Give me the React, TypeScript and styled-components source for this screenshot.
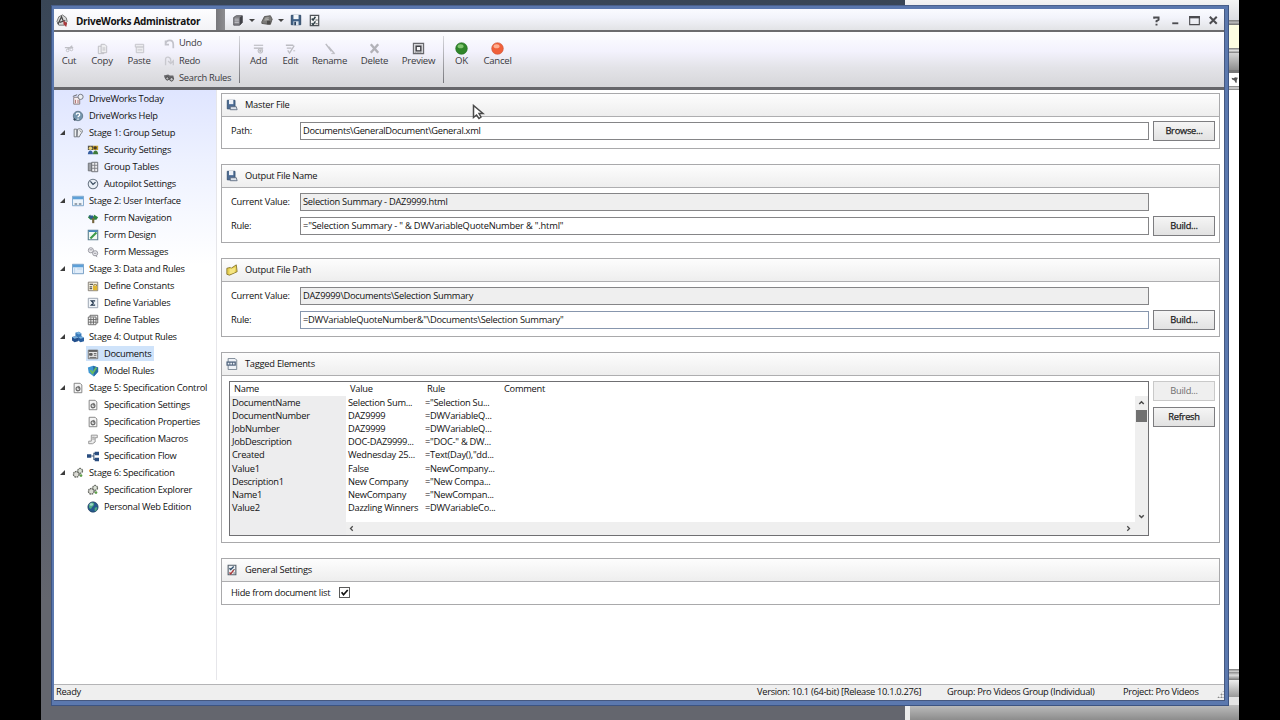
import React from 'react';
import styled, { createGlobalStyle } from 'styled-components';

const GlobalStyle = createGlobalStyle`
  * { box-sizing: border-box; }
  body { margin: 0; background: #000; overflow: hidden; }
  svg { flex: none; }
`;

const Desktop = styled.div`
  position: relative;
  width: 1280px;
  height: 720px;
  padding: 0 41px;
  background: #000;
  overflow: hidden;
  display: flex;
  font: 9.3px/14px 'Open Sans', 'Noto Sans', sans-serif;
  letter-spacing: -0.26px;
  color: #111;
  white-space: nowrap;
`;
const Wallpaper = styled.div`
  width: 864px;
  background: linear-gradient(#394656 0, #3f4b5d 120px, #4a5468 330px, #64666e 600px, #64666e);
`;
const BackWindow = styled.div`
  flex: 1;
  display: flex;
  flex-direction: column;
  background: #fff;
`;
const Strip = styled.div<{ $h: number; $bg: string }>`
  height: ${p => p.$h}px;
  flex: none;
  background: ${p => p.$bg};
`;
const BackFoot = styled.div`
  flex: 1;
  border-left: 5px solid #ececec;
  background: linear-gradient(#bdbdbd, #8c8c8c);
`;
const BackMark = styled.div`
  height: 13px;
  display: flex;
  justify-content: flex-end;
  align-items: center;
  background: #fff;
`;

const Window = styled.div`
  position: absolute;
  left: 51px;
  top: 5px;
  width: 1178px;
  height: 701px;
  border: 1px solid #3d5482;
  border-top-color: #4a608b;
  background: #5b78ae;
  padding: 3px 3px 4px 2px;
  display: flex;
`;
const Frame = styled.div`
  flex: 1;
  min-width: 0;
  display: flex;
  flex-direction: column;
  background: #fff;
  border: solid #46587f;
  border-width: 0 1px 1px 0;
`;
const TitleBar = styled.div`
  height: 23px;
  display: flex;
  align-items: center;
  background: linear-gradient(#fafbff, #f3f4fb 40%, #e2e3e6);
  border-bottom: 2px solid #6b6b6e;
`;
const Brand = styled.div`
  width: 162px;
  height: 21px;
  padding: 2px 0 0 2px;
  display: flex;
  align-items: center;
  gap: 7px;
  background: linear-gradient(#fdfdff, #f3f3f6);
  font-size: 10px;
  font-weight: 700;
  letter-spacing: -0.3px;
  color: #111;
`;
const BrandEdge = styled.div`
  width: 9px;
  height: 21px;
  background: linear-gradient(90deg, #77777b, #8d8d91);
`;
const QuickBar = styled.div`
  flex: 1;
  display: flex;
  align-items: center;
  padding: 1px 0 0 6.5px;
`;
const Caret = styled.i`
  border: 3px solid transparent;
  border-bottom-width: 0;
  border-top-color: #444;
  margin: 0 6px 0 5px;
`;
const QuickGap = styled.i<{ $w: number }>`width: ${p => p.$w}px;`;
const Controls = styled.div`
  display: flex;
  align-items: center;
  gap: 6px;
  padding: 2px 4px 0 0;
`;

const Toolbar = styled.div`
  height: 58px;
  display: flex;
  background: linear-gradient(#fdfdff 0, #f3f2fd 35%, #e3e3e8 65%, #d6d6d9);
  border-bottom: 3px solid #66666a;
  color: #3a3a40;
`;
const Tool = styled.div<{ $w: number }>`
  width: ${p => p.$w}px;
  padding-top: 10px;
  display: flex;
  flex-direction: column;
  align-items: center;
  font-size: 9.6px;
  line-height: 11px;
`;
const SmallTools = styled.div`
  width: 78.5px;
  padding: 2px 0 0 3px;
`;
const SmallTool = styled.div`
  height: 17.7px;
  display: flex;
  align-items: center;
  gap: 4px;
`;
const Divider = styled.div`
  width: 1px;
  margin: 4px 0;
  background: linear-gradient(#d8d8de, #77777c);
`;

const Body = styled.div`
  flex: 1;
  display: flex;
  min-height: 0;
  background: #fff;
`;
const Sidebar = styled.div`
  width: 163px;
  background: linear-gradient(#dfe5ff 0, #edf1ff 70px, #fff 175px);
  border-right: 1px solid #e6e6ea;
  margin-bottom: 4px;
`;
const TreeRow = styled.div<{ $level: number }>`
  height: 17px;
  padding-left: ${p => (p.$level === 2 ? 32 : 6)}px;
  display: flex;
  align-items: center;
`;
const Expander = styled.span<{ $open?: boolean }>`
  width: 11px;
  flex: none;
  display: flex;
  &::before {
    content: '';
    border-style: solid;
    border-width: 0 0 5px 5px;
    border-color: transparent transparent ${p => (p.$open ? '#3c3c3c' : 'transparent')} transparent;
  }
`;
const TreeLabel = styled.span<{ $on?: boolean }>`
  height: 15px;
  line-height: 15px;
  padding: 0 3px 0 4px;
  background: ${p => (p.$on ? '#cfe3fa' : 'none')};
`;
const TreeIcon = styled.span<{ $on?: boolean }>`
  width: 14px;
  height: 15px;
  flex: none;
  display: flex;
  align-items: center;
  justify-content: center;
  background: ${p => (p.$on ? '#cfe3fa' : 'none')};
`;

const Content = styled.div`
  flex: 1;
  padding: 3px 4px 0 4px;
  display: flex;
  flex-direction: column;
  gap: 15px;
`;
const Panel = styled.section<{ $h: number }>`
  height: ${p => p.$h}px;
  border: 1px solid #a9a9ab;
  background: #fff;
`;
const PanelHead = styled.header`
  height: 23px;
  padding-left: 4px;
  display: flex;
  align-items: center;
  gap: 7px;
  background: linear-gradient(#fdfdfd, #eeeeee);
  border-bottom: 1px solid #aeaeb0;
`;
const Fields = styled.div`
  padding: 4px 4px 0 9px;
  display: flex;
  flex-direction: column;
  gap: 4px;
`;
const Field = styled.div`
  height: 20px;
  display: flex;
  align-items: center;
`;
const FieldName = styled.label`
  width: 69px;
`;
const Box = styled.div<{ $ro?: boolean; $blue?: boolean; $t?: number }>`
  width: 849px;
  height: 18px;
  padding-left: 2px;
  line-height: 15.5px;
  border: 1px solid ${p => (p.$blue ? '#8796ad' : '#858587')};
  background: ${p => (p.$ro ? '#efefef' : '#fff')};
  letter-spacing: ${p => p.$t ?? -0.26}px;
`;
const Btn = styled.button<{ $off?: boolean }>`
  width: 62px;
  height: 20px;
  margin-left: 4px;
  padding: 0;
  font: inherit;
  letter-spacing: -0.26px;
  -webkit-text-stroke: ${p => (p.$off ? 0 : 0.25)}px;
  color: ${p => (p.$off ? '#6e6e6e' : '#1c1c1c')};
  border: 1px solid ${p => (p.$off ? '#c9c9c9' : '#7d7d80')};
  background: ${p => (p.$off ? '#efefef' : 'linear-gradient(#f5f5f5, #e2e2e2)')};
`;

const GridArea = styled.div`
  padding: 4px 0 0 7px;
  display: flex;
`;
const Grid = styled.div`
  width: 920px;
  height: 155px;
  margin-top: 1px;
  border: 1px solid #6f6f72;
  background: #fff;
  display: flex;
  flex-direction: column;
`;
const GridHead = styled.div`
  height: 14px;
  display: grid;
  grid-template-columns: 116px 77px 77px 1fr;
  padding-left: 4px;
  line-height: 14px;
`;
const GridMain = styled.div`
  flex: 1;
  display: flex;
  min-height: 0;
`;
const Names = styled.div`
  width: 116px;
  padding-left: 2px;
  background: #ededee;
`;
const Cell = styled.div`
  height: 13.12px;
  line-height: 13.12px;
`;
const Scroller = styled.div`
  flex: 1;
  display: flex;
  flex-direction: column;
`;
const Cells = styled.div`
  flex: 1;
  display: flex;
`;
const Column = styled.div<{ $w?: number }>`
  ${p => (p.$w ? `width: ${p.$w}px;` : 'flex: 1;')}
  padding-left: 2px;
`;
const VBar = styled.div`
  width: 13px;
  padding: 3px 0 2px;
  display: flex;
  flex-direction: column;
  align-items: center;
  background: #efefef;
`;
const Thumb = styled.div`
  width: 11px;
  height: 12px;
  margin: 4px 0 auto;
  background: #717171;
`;
const HBar = styled.div`
  height: 13px;
  padding: 0 16px 0 2px;
  display: flex;
  align-items: center;
  justify-content: space-between;
  background: #efefef;
`;
const BtnStack = styled.div`
  padding-top: 1px;
  display: flex;
  flex-direction: column;
  gap: 6px;
`;
const CheckRow = styled.div`
  height: 21px;
  padding-left: 9px;
  display: flex;
  align-items: center;
  gap: 9px;
`;
const Check = styled.span`
  width: 11px;
  height: 11px;
  border: 1px solid #5a5a5a;
  display: flex;
`;

const StatusBar = styled.footer`
  height: 16px;
  display: flex;
  align-items: center;
  padding: 0 0 2px 2px;
  background: #efefef;
  border-top: 1px solid #b4b4b6;
`;
const StatusItem = styled.span<{ $w?: number }>`
  ${p => (p.$w ? `width: ${p.$w}px;` : 'flex: 1;')}
  letter-spacing: -0.31px;
`;
const Grip = styled.span`
  width: 7px;
  height: 8px;
  margin-top: 5px;
  background: radial-gradient(#8a8a8a 0.9px, transparent 1.1px) 0 0 / 3px 3px;
  clip-path: polygon(100% 0, 100% 100%, 0 100%);
`;
const Pointer = styled.div`
  position: absolute;
  left: 472px;
  top: 104px;
  line-height: 0;
`;

const shapes: Record<string, React.ReactNode> = {
  logo: <><path d="M3 3l4-2 4 3 1 4-3 4H3L1 8z" fill="#dadada" stroke="#6e6e6e" /><path d="M2 11l4-8 2 5M4 9l6-2" fill="none" stroke="#454545" strokeWidth="1.3" /><path d="M8 7l4 3-1 4-3-3z" fill="#a8383c" /></>,
  cube: <><path d="M2 4l3-2h7v8l-3 3H2z" fill="#85858a" stroke="#4f4f55" /><path d="M9 4l3-2v8l-3 3z" fill="#3f4046" /><path d="M3 6h5M3 8h5M3 10h5" stroke="#c6c6cb" /></>,
  cube2: <><path d="M1 9l3-6 7-1 2 4-2 6H8L1 11z" fill="#7c7b79" stroke="#53524f" /><path d="M5 5l4-.5M4 7l5-.5" stroke="#c2c2be" /><path d="M7 8h4v4H7z" fill="#4c4b49" /></>,
  save: <><path d="M1.500 1.500h11v11h-11z" fill="#3f6187" stroke="#28415f" /><path d="M4 1h6v5H4z" fill="#f3f6fa" /><path d="M4 8.500h6V13H4z" fill="#dbe3ec" /><path d="M5 9h2v4H5z" fill="#28415f" /></>,
  list: <><path d="M2.500 1.500h9v11h-9z" fill="#f4f4f4" stroke="#4f5358" strokeWidth="1.300" /><path d="M4 5l1.500 1.500L8 3M4 10l1.500 1.500L8 8" fill="none" stroke="#2e3f46" strokeWidth="1.600" /><path d="M8 6.500h2.500M8 10.500h2.500" stroke="#555" /></>,
  checklist: <><path d="M2.500 1.500h9v11h-9z" fill="#eef1f4" stroke="#56616c" strokeWidth="1.300" /><path d="M4 5l1.500 1.500L9 3" fill="none" stroke="#34516d" strokeWidth="1.600" /><path d="M4 10l1.500 1.500L9 7" fill="none" stroke="#a83c3c" strokeWidth="1.600" /><path d="M8.500 6.500h2M8.500 10.500h2" stroke="#666" /></>,
  help: <path d="M4.500 5V3.700h4.700v2.500L7 7.600V9M7 10.500v1.800" fill="none" stroke="#4c4c50" strokeWidth="2.100" />,
  min: <path d="M3.500 10h6.500" stroke="#4c4c50" strokeWidth="2" />,
  max: <><path d="M1.800 2.800h10.400v8.700H1.800z" fill="none" stroke="#4c4c50" strokeWidth="1.200" /><path d="M1.200 3.500h11.600" stroke="#4c4c50" strokeWidth="2.400" /></>,
  close: <path d="M3 3l7.500 7.500M10.500 3L3 10.500" stroke="#4c4c50" strokeWidth="2.200" />,
  cut: <g fill="none" stroke="#bfbfc5"><path d="M2 6h9M5 8l5-4" strokeWidth="1.500" /><circle cx="5" cy="9" r="1.500" /><circle cx="9" cy="8" r="1.500" /></g>,
  copy: <g fill="#eeeef0" stroke="#bcbcc2"><path d="M2.500 4.500h6v8h-6z" /><path d="M5.500 2.500h4l2 2v7h-6z" /><path d="M7 6.500h3M7 8.500h3" /></g>,
  paste: <g fill="#ececef" stroke="#c4c4c9"><path d="M2.500 2.500h9v3h-9z" /><path d="M3.500 5.500h8v6h-8z" /><path d="M5 8.500h5" /></g>,
  undo: <path d="M3 4v5h4M3 8c1-5 9-6 9 1v4" fill="none" stroke="#c3c3cb" strokeWidth="2" />,
  redo: <path d="M3 12V5c0-4 6-3 6 1v2M6 7l3 3 3-3v5" fill="none" stroke="#c9c9cf" strokeWidth="1.600" />,
  binoc: <><path d="M1 4l5-1 2 1 4 0 1 4-3 3-3-2-2 1-3-3z" fill="#67676b" /><circle cx="5" cy="7.500" r="1.800" fill="#b8b8bc" stroke="#444" /><circle cx="10" cy="8.500" r="2" fill="#c8c8cc" stroke="#444" /></>,
  add: <g fill="none" stroke="#b5b5bb"><path d="M2 3.500h10M2 6.500h10" strokeWidth="1.300" /><circle cx="9" cy="9.500" r="2.500" fill="#e6e6ea" /><path d="M9 8v3M7.500 9.500h3" /></g>,
  edit: <g fill="none" stroke="#bcbcc2"><path d="M2 3.500h8M3 6.500h5M4 9l2 3 5-8" strokeWidth="1.400" /><path d="M10 9.500h2" /></g>,
  rename: <g fill="none" stroke="#bdbdc3"><path d="M3 2l6 8M6 5l6 7" strokeWidth="1.600" /><path d="M9 12.500h4" /></g>,
  del: <path d="M3 2.500l8 9M11 2.500l-8 9" stroke="#b2b2b8" strokeWidth="2.600" />,
  preview: <><path d="M1.500 1.500h11v11h-11z" fill="#d6d6da" stroke="#66666b" strokeWidth="1.200" /><path d="M4.500 4.500h5v5h-5z" fill="#f4f4f6" stroke="#3f3f44" strokeWidth="1.500" /><path d="M3 11.500h8" stroke="#777" strokeDasharray="1 1" /></>,
  ok: <><circle cx="7" cy="7" r="6.300" fill="#2f8529" stroke="#1f6a20" strokeWidth=".6" /><ellipse cx="6" cy="4.500" rx="3.200" ry="2.200" fill="#8fd07c" opacity=".85" /></>,
  cancel: <><circle cx="7" cy="7" r="6.300" fill="#f0603a" stroke="#c9563a" strokeWidth=".6" /><ellipse cx="6" cy="4.500" rx="3.200" ry="2.200" fill="#ffb89c" opacity=".9" /></>,
  today: <><path d="M2 5h7v8H2z" fill="#f6eeee" stroke="#7d7577" /><path d="M4 8v4M7 8v4" stroke="#a55b5b" /><circle cx="10" cy="4.500" r="3" fill="#eceff4" stroke="#666b75" /><path d="M1 4l5-2" stroke="#555" /></>,
  qhelp: <><circle cx="7" cy="7" r="5.500" fill="#7596ae" stroke="#5c7283" /><path d="M5 5.500c0-2.500 4-2.500 4 0 0 1.500-2 1.500-2 3M7 10v1.500" fill="none" stroke="#fff" strokeWidth="1.500" /><path d="M2 10l2 2" stroke="#34485a" strokeWidth="2" /></>,
  stage1: <g fill="#eceef0" stroke="#6b6f75"><path d="M2.500 2.500h3v9h-3z" /><path d="M6.500 2.500c6-2 7 4 4 5l-2 4H6z" /><path d="M9 4l2 2" /></g>,
  security: <><path d="M1 2h6v5H1z" fill="#57544a" /><path d="M7 2h6v5H7z" fill="#c79e2c" /><circle cx="4" cy="5" r="2" fill="#ecd478" /><circle cx="9.500" cy="4.500" r="2" fill="#443a26" /><path d="M1 12c0-6 6-6 6 0z" fill="#375fa0" /><path d="M7 12c0-6 6-6 6 0z" fill="#3f7a3a" /></>,
  tables: <><path d="M1.500 2.500h4v9h-4z" fill="#9da0a5" stroke="#6b6e73" /><path d="M5.500 1.500h7v11h-7z" fill="#ededf0" stroke="#5f6267" /><path d="M5.500 5h7M5.500 8.500h7M9 2v10" stroke="#77797e" /></>,
  clock: <><circle cx="7" cy="7" r="5.600" fill="#e9eff6" stroke="#6a7684" strokeWidth="1.200" /><path d="M4 4l3 3.500L10 5" fill="none" stroke="#35475c" strokeWidth="1.400" /></>,
  form: <><path d="M.5 1.500h13v11H.5z" fill="#edf4fb" stroke="#6f9cc4" /><path d="M1 2h12v3H1z" fill="#5da0d8" /><path d="M3 10.500h3M8 10.500h3" stroke="#7a8896" strokeWidth="2" /></>,
  data: <><path d="M.5 1.500h13v11H.5z" fill="#e2eefa" stroke="#6893bd" /><path d="M1 2h12v3H1z" fill="#5da0d8" /><path d="M3 6v6M6 7h6" stroke="#b8d2ea" /></>,
  sign: <><path d="M1 6l3-3v2h4V3l5 3-2 3H4z" fill="#2d8540" /><path d="M2 4h5v4H4z" fill="#2f5a92" /><path d="M6 7h2.500v6H6z" fill="#75663e" /></>,
  design: <><path d="M1.500 1.500h11v11h-11z" fill="#f2faf4" stroke="#5b7f8f" strokeWidth="1.300" /><path d="M2 2.500h10" stroke="#4286bd" strokeWidth="2" /><path d="M4 11l7-7" stroke="#3a9a49" strokeWidth="2.400" /></>,
  msg: <g fill="#ebebef" stroke="#8e8e96"><circle cx="4.500" cy="5" r="3" /><circle cx="9.500" cy="8.500" r="3" /><path d="M3 4.500h3M8 8.500h3M10 11l2 2" /></g>,
  constants: <><path d="M1.500 2.500h11v10h-11z" fill="#f4f0df" stroke="#77726a" /><path d="M3 5h4M3 8h3M3 10h3" stroke="#5c5c5c" strokeWidth="1.400" /><path d="M7 7h5v5H7z" fill="#e0b632" /><path d="M8 7V5.500h3V7" fill="none" stroke="#8d6f1c" /></>,
  sigma: <><path d="M1.500 1.500h11v11h-11z" fill="#f1f5f9" stroke="#8d98a6" /><path d="M9.500 4.500H5L7.500 7 5 9.500h4.500" fill="none" stroke="#26384f" strokeWidth="1.400" /></>,
  dtables: <g fill="#f1f1f1" stroke="#606060"><path d="M3.500 1.500h9v9h-9z" /><path d="M1.500 3.500h9v9h-9z" /><path d="M1.500 6.500h9M1.500 9.500h9M4.500 4v8M7.500 4v8M10 6h3" /></g>,
  cubes: <><path d="M4 2l4-1 3 2v4L8 8 4 6z" fill="#3979b8" /><path d="M0 7l4-1 3 2v4l-4 1-3-2z" fill="#234f8c" /><path d="M7 7l4-1 3 2v4l-4 1-3-2z" fill="#2a5f9f" /><path d="M4 2l4-1 3 2-3 1zM0 7l4-1 3 2-4 1zM7 7l4-1 3 2-4 1z" fill="#76b0dd" /></>,
  docs: <><path d="M1.500 2.500h11v10h-11z" fill="#e6e6e6" stroke="#6b6b6b" /><path d="M2 3.500h10" stroke="#565656" strokeWidth="2" /><path d="M3 6.500h3v2H3zM8 6.500h3M8 8.500h3M3 11h8" fill="#666" stroke="#555" /></>,
  model: <><path d="M1 3l6-2 6 2v5l-5 5.500L2 9z" fill="#3f97d3" /><path d="M7 1l6 2v5l-5 5.500z" fill="#2a6ca3" /><path d="M4 6l2.500 3.500L11 3" fill="none" stroke="#69bd5a" strokeWidth="2" /></>,
  spec: <><path d="M2.500 1.500h7l2 2v9h-9z" fill="#f5f5f5" stroke="#777" /><circle cx="7" cy="8" r="2.300" fill="#ddd" stroke="#666" strokeWidth="1.300" /><path d="M8 8V4.500" stroke="#666" /></>,
  macro: <g fill="#ececec" stroke="#8a8a8a"><path d="M5 2.500h7v3H9.500v5l-3 2H2v-3h3z" /><path d="M6 5h3M6 7h3" /></g>,
  flow: <><path d="M5 7h3V4h2M8 7v4h2" fill="none" stroke="#47617f" strokeWidth="1.300" /><path d="M0 5h5v4H0zM9 2h5v4H9zM9 9h5v4H9z" fill="#294d80" /></>,
  gears: <><circle cx="5" cy="8.500" r="3.300" fill="#dcdcd6" stroke="#63655f" strokeWidth="1.600" strokeDasharray="2 .7" /><circle cx="9.500" cy="4.500" r="2.800" fill="#dde3d8" stroke="#6a6d66" strokeWidth="1.500" strokeDasharray="2 .7" /><circle cx="10.500" cy="10" r="1.600" fill="#5f9f4a" /></>,
  globe: <><circle cx="7" cy="7" r="6" fill="#25598e" stroke="#24405e" strokeWidth=".8" /><path d="M5 2c4-1 4 3 2 4s-1 3-3 3-3-5 1-7zM9 8l3-1-1 4-2 1z" fill="#4fae80" /><ellipse cx="5" cy="4" rx="2" ry="1.400" fill="#c4e6ef" opacity=".7" /></>,
  disk: <><path d="M1.500 1.500h9v10h-9z" fill="#4c6c94" stroke="#35506f" /><path d="M3.500 1h5v5h-5z" fill="#eef2f8" /><path d="M5 9h7l1 3.500H5z" fill="#dce2ea" stroke="#5c6b7e" /></>,
  folder: <><path d="M1 5l4-1 1 1 6-4 1 8-9 4-3-1z" fill="#e6cf50" stroke="#82702a" /><path d="M4 6l7-2-1 6-6 2z" fill="#f5e583" /></>,
  tagdoc: <><path d="M2.500.5h8l2 2v11h-10z" fill="#eef2f7" stroke="#6b7887" /><path d="M.5 4h11v5H.5z" fill="#50647d" /><path d="M2 6.500h2M5 6.500h2M8 6.500h2" stroke="#e8eef5" strokeWidth="2" /></>,
  tick: <path d="M2.500 6.500l3 4L12 3" fill="none" stroke="#111" strokeWidth="2.600" />,
  up: <path d="M2.500 10L7 5.500l4.500 4.500" fill="none" stroke="#4b4b4b" strokeWidth="3" />,
  down: <path d="M2.500 4.500L7 9l4.500-4.500" fill="none" stroke="#4b4b4b" strokeWidth="3" />,
  left: <path d="M9.500 2.500L5 7l4.500 4.500" fill="none" stroke="#4b4b4b" strokeWidth="2.600" />,
  right: <path d="M4.500 2.500L9 7l-4.500 4.500" fill="none" stroke="#4b4b4b" strokeWidth="2.600" />,
  crest: <path d="M1 3l4 1 2-2 5 1-2 5v4H8L6 8 2 6z" fill="#555" />,
};

const Icon = ({ name, size = 12 }: { name: string; size?: number }) => (
  <svg width={size} height={size} viewBox="0 0 14 14">{shapes[name]}</svg>
);

type Node = [level: number, icon: string, text: string, open?: boolean];
const tree: Node[] = [
  [1, 'today', 'DriveWorks Today'],
  [1, 'qhelp', 'DriveWorks Help'],
  [1, 'stage1', 'Stage 1: Group Setup', true],
  [2, 'security', 'Security Settings'],
  [2, 'tables', 'Group Tables'],
  [2, 'clock', 'Autopilot Settings'],
  [1, 'form', 'Stage 2: User Interface', true],
  [2, 'sign', 'Form Navigation'],
  [2, 'design', 'Form Design'],
  [2, 'msg', 'Form Messages'],
  [1, 'data', 'Stage 3: Data and Rules', true],
  [2, 'constants', 'Define Constants'],
  [2, 'sigma', 'Define Variables'],
  [2, 'dtables', 'Define Tables'],
  [1, 'cubes', 'Stage 4: Output Rules', true],
  [2, 'docs', 'Documents'],
  [2, 'model', 'Model Rules'],
  [1, 'spec', 'Stage 5: Specification Control', true],
  [2, 'spec', 'Specification Settings'],
  [2, 'spec', 'Specification Properties'],
  [2, 'macro', 'Specification Macros'],
  [2, 'flow', 'Specification Flow'],
  [1, 'gears', 'Stage 6: Specification', true],
  [2, 'gears', 'Specification Explorer'],
  [2, 'globe', 'Personal Web Edition'],
];

const rows = [
  ['DocumentName', 'Selection Sum...', '="Selection Su...'],
  ['DocumentNumber', 'DAZ9999', '=DWVariableQ...'],
  ['JobNumber', 'DAZ9999', '=DWVariableQ...'],
  ['JobDescription', 'DOC-DAZ9999...', '="DOC-" & DW...'],
  ['Created', 'Wednesday 25...', '=Text(Day(),"dd...'],
  ['Value1', 'False', '=NewCompany...'],
  ['Description1', 'New Company', '="New Compa...'],
  ['Name1', 'NewCompany', '="NewCompan...'],
  ['Value2', 'Dazzling Winners', '=DWVariableCo...'],
];

const ToolItem = ({ w, icon, label }: { w: number; icon: string; label: string }) => (
  <Tool $w={w}><Icon name={icon} size={13} />{label}</Tool>
);

export default function App() {
  return (
    <Desktop>
      <GlobalStyle />
      <Wallpaper />
      <BackWindow>
        <Strip $h={20} $bg="linear-gradient(#f4f4f4, #dcdde2)" />
        <Strip $h={5} $bg="linear-gradient(#7a7a7a, #b5b5b5 50%, #6d6d6d)" />
        <Strip $h={23} $bg="#fdfde2" />
        <Strip $h={5} $bg="linear-gradient(#777, #ddd 50%, #777)" />
        <Strip $h={17} $bg="linear-gradient(#d5d5d5, #8e8e8e)" />
        <Strip $h={3} $bg="#777" />
        <BackMark><Icon name="crest" size={8} /></BackMark>
        <Strip $h={4} $bg="linear-gradient(#777, #ddd 50%, #777)" />
        <Strip $h={579} $bg="#fff" />
        <Strip $h={3} $bg="linear-gradient(#777, #ddd)" />
        <Strip $h={8} $bg="linear-gradient(#888, #ddd 40%, #777)" />
        <Strip $h={17} $bg="linear-gradient(#eee, #999)" />
        <Strip $h={8} $bg="#e4e4e4" />
        <BackFoot />
      </BackWindow>

      <Window>
        <Frame>
          <TitleBar>
            <Brand><Icon name="logo" size={13} />DriveWorks Administrator</Brand>
            <BrandEdge />
            <QuickBar>
              <Icon name="cube" /><Caret />
              <Icon name="cube2" /><Caret />
              <Icon name="save" /><QuickGap $w={6} />
              <Icon name="list" size={13} />
            </QuickBar>
            <Controls>
              <Icon name="help" size={13} /><Icon name="min" size={13} /><Icon name="max" size={13} /><Icon name="close" size={13} />
            </Controls>
          </TitleBar>
          <Toolbar>
            <ToolItem w={30} icon="cut" label="Cut" />
            <ToolItem w={36} icon="copy" label="Copy" />
            <ToolItem w={38} icon="paste" label="Paste" />
            <QuickGap $w={2} />
            <SmallTools>
              <SmallTool><Icon name="undo" />Undo</SmallTool>
              <SmallTool><Icon name="redo" />Redo</SmallTool>
              <SmallTool><Icon name="binoc" />Search Rules</SmallTool>
            </SmallTools>
            <Divider />
            <QuickGap $w={2} />
            <ToolItem w={34} icon="add" label="Add" />
            <ToolItem w={30} icon="edit" label="Edit" />
            <ToolItem w={48} icon="rename" label="Rename" />
            <ToolItem w={42} icon="del" label="Delete" />
            <ToolItem w={46} icon="preview" label="Preview" />
            <QuickGap $w={1} />
            <Divider />
            <QuickGap $w={1} />
            <ToolItem w={34} icon="ok" label="OK" />
            <ToolItem w={38} icon="cancel" label="Cancel" />
          </Toolbar>
          <Body>
            <Sidebar>
              {tree.map(([level, icon, text, open]) => (
                <TreeRow key={text} $level={level}>
                  {level === 1 && <Expander $open={open} />}
                  <TreeIcon $on={text === 'Documents'}><Icon name={icon} /></TreeIcon>
                  <TreeLabel $on={text === 'Documents'}>{text}</TreeLabel>
                </TreeRow>
              ))}
            </Sidebar>
            <Content>
              <Panel $h={56}>
                <PanelHead><Icon name="disk" />Master File</PanelHead>
                <Fields>
                  <Field><FieldName>Path:</FieldName><Box $t={-0.3}>Documents\GeneralDocument\General.xml</Box><Btn>Browse...</Btn></Field>
                </Fields>
              </Panel>
              <Panel $h={79}>
                <PanelHead><Icon name="disk" />Output File Name</PanelHead>
                <Fields>
                  <Field><FieldName>Current Value:</FieldName><Box $ro>Selection Summary - DAZ9999.html</Box></Field>
                  <Field><FieldName>Rule:</FieldName><Box $t={-0.18}>="Selection Summary - " &amp; DWVariableQuoteNumber &amp; ".html"</Box><Btn>Build...</Btn></Field>
                </Fields>
              </Panel>
              <Panel $h={79}>
                <PanelHead><Icon name="folder" />Output File Path</PanelHead>
                <Fields>
                  <Field><FieldName>Current Value:</FieldName><Box $ro>DAZ9999\Documents\Selection Summary</Box></Field>
                  <Field><FieldName>Rule:</FieldName><Box $blue $t={-0.24}>=DWVariableQuoteNumber&amp;"\Documents\Selection Summary"</Box><Btn>Build...</Btn></Field>
                </Fields>
              </Panel>
              <Panel $h={191}>
                <PanelHead><Icon name="tagdoc" />Tagged Elements</PanelHead>
                <GridArea>
                  <Grid>
                    <GridHead><span>Name</span><span>Value</span><span>Rule</span><span>Comment</span></GridHead>
                    <GridMain>
                      <Names>{rows.map(r => <Cell key={r[0]}>{r[0]}</Cell>)}</Names>
                      <Scroller>
                        <Cells>
                          <Column $w={77}>{rows.map(r => <Cell key={r[0]}>{r[1]}</Cell>)}</Column>
                          <Column>{rows.map(r => <Cell key={r[0]}>{r[2]}</Cell>)}</Column>
                          <VBar><Icon name="up" size={7} /><Thumb /><Icon name="down" size={7} /></VBar>
                        </Cells>
                        <HBar><Icon name="left" size={7} /><Icon name="right" size={7} /></HBar>
                      </Scroller>
                    </GridMain>
                  </Grid>
                  <BtnStack><Btn $off>Build...</Btn><Btn>Refresh</Btn></BtnStack>
                </GridArea>
              </Panel>
              <Panel $h={47}>
                <PanelHead><Icon name="checklist" />General Settings</PanelHead>
                <CheckRow>Hide from document list<Check><Icon name="tick" size={9} /></Check></CheckRow>
              </Panel>
            </Content>
          </Body>
          <StatusBar>
            <StatusItem>Ready</StatusItem>
            <StatusItem $w={190}>Version: 10.1 (64-bit) [Release 10.1.0.276]</StatusItem>
            <StatusItem $w={176}>Group: Pro Videos Group (Individual)</StatusItem>
            <StatusItem $w={94}>Project: Pro Videos</StatusItem>
            <Grip />
          </StatusBar>
        </Frame>
      </Window>

      <Pointer>
        <svg width="13" height="17" viewBox="0 0 13 17"><path d="M1.500 1.500v12l3-2.500 2.500 3.500 2-1.500-2-3.500h4z" fill="#fff" stroke="#4a4a4a" strokeWidth="1.500" /></svg>
      </Pointer>
    </Desktop>
  );
}
